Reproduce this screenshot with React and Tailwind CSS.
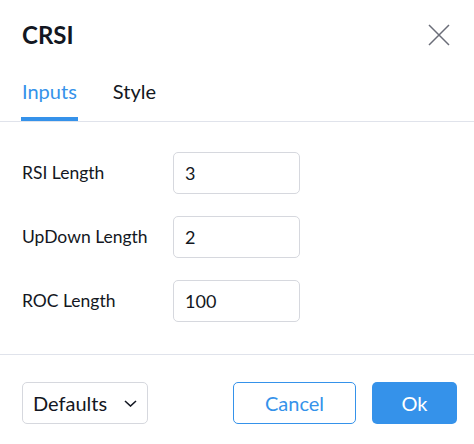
import React from "react";

function Row({ label, value }) {
  return (
    <div className="flex items-center h-[42px]">
      <div className="w-[151px] text-[17.5px] leading-[24px] text-[#131722]">{label}</div>
      <div className="w-[127px] h-[42px] border border-[#d6d8de] rounded-[5px] flex items-center px-[11px] text-[18px] text-[#131722]">
        {value}
      </div>
    </div>
  );
}

export default function App() {
  return (
    <div className="w-[474px] h-[444px] bg-white font-['Lato',sans-serif] flex flex-col">
      {/* header */}
      <div className="h-[69px] flex items-center justify-between pl-[22px] pr-[24px]">
        <div className="text-[24px] leading-[32px] font-bold text-[#131722]">CRSI</div>
        <svg width="22" height="22" viewBox="0 0 22 22" className="text-[#6a6d78]">
          <path d="M1 1 L21 21 M21 1 L1 21" stroke="currentColor" strokeWidth="1.5" fill="none" />
        </svg>
      </div>
      {/* tabs */}
      <div className="h-[53px] border-b border-[#e0e3eb] flex gap-[36px] px-[22px]">
        <div className="relative pt-[10px] text-[20px] leading-[24px] text-[#3592ea]">
          Inputs
          <div className="absolute left-[-1px] right-[-1px] bottom-0 h-[4px] bg-[#3592ea]" />
        </div>
        <div className="pt-[10px] text-[20px] leading-[24px] text-[#131722]">Style</div>
      </div>
      {/* body */}
      <div className="pt-[30px] pb-[32px] px-[22px] flex flex-col gap-[22px] border-b border-[#e0e3eb]">
        <Row label="RSI Length" value="3" />
        <Row label="UpDown Length" value="2" />
        <Row label="ROC Length" value="100" />
      </div>
      {/* footer */}
      <div className="pt-[27px] pl-[22px] pr-[17px] flex items-start">
        <button className="w-[126px] h-[42px] border border-[#d6d8de] rounded-[5px] flex items-center justify-between pl-[10px] pr-[10px] text-[20px] text-[#131722]">
          <span>Defaults</span>
          <svg width="13" height="7" viewBox="0 0 13 7">
            <path d="M1 1 L6.5 6 L12 1" stroke="#131722" strokeWidth="1.6" fill="none" />
          </svg>
        </button>
        <div className="flex-1" />
        <button className="w-[123px] h-[42px] border border-[#3592ea] rounded-[5px] text-[20px] text-[#3592ea] flex items-center justify-center">
          Cancel
        </button>
        <button className="ml-[16px] w-[85px] h-[42px] rounded-[5px] bg-[#3592ea] text-[20px] text-white flex items-center justify-center">
          Ok
        </button>
      </div>
    </div>
  );
}
